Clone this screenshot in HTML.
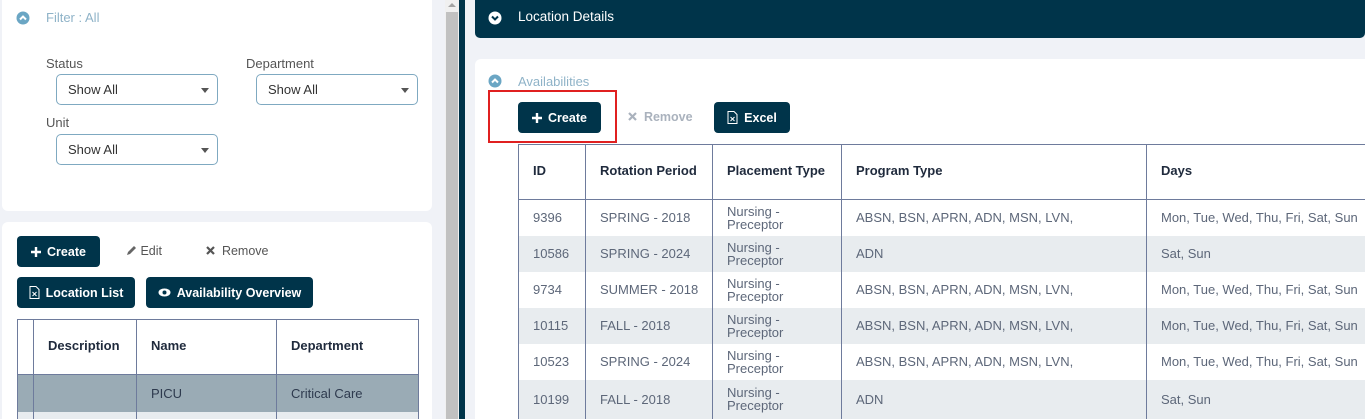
<!DOCTYPE html>
<html style="overflow:hidden;height:419px"><head><meta charset="utf-8"><style>
*{box-sizing:border-box;margin:0;padding:0}
html,body{overflow:hidden}
body{width:1365px;height:419px;background:#f0f2f7;font-family:"Liberation Sans",sans-serif;font-size:13px;color:#3d4a5c;position:relative}
.a{position:absolute}
.card{background:#fff;border-radius:6px}
.lbl{color:#555;font-size:13px}
.sel{border:1px solid #7fa9c1;border-radius:5px;height:31px;background:#fff;padding:7px 11px;font-size:13px;color:#333}
.sel:after{content:"";position:absolute;right:8px;top:13px;border:4.5px solid transparent;border-top:5px solid #555}
.btn{background:#00344a;color:#fff;border-radius:4px;font-weight:bold;font-size:12.5px;display:flex;align-items:center;justify-content:center;gap:6px}
table{border-collapse:collapse;position:absolute;table-layout:fixed}
td,th{border-left:1px solid #6e7b9c;border-right:1px solid #6e7b9c;padding:0 14px;text-align:left;white-space:nowrap;overflow:hidden}
th{font-weight:bold;color:#1f2a3c;font-size:13px;border-bottom:1px solid #6e7b9c;padding-bottom:3px}
td{color:#5d6779;font-size:13px}
.z td{background:#e8ecef}
td.w{white-space:normal;line-height:13px}
</style></head><body>
<div class="a card" style="left:2px;top:-6px;width:430px;height:217px"></div>
<svg class="a" style="left:16px;top:11px" width="14" height="14" viewBox="0 0 14 14"><circle cx="7" cy="7" r="6.5" fill="#6ba6c4"/><path d="M4 8.5 7 5.5 10 8.5" stroke="#fff" stroke-width="2" fill="none"/></svg>
<div class="a" style="left:46px;top:10px;color:#8fb3c8;font-size:13px">Filter : All</div>
<div class="a lbl" style="left:46px;top:56px">Status</div>
<div class="a lbl" style="left:246px;top:56px">Department</div>
<div class="a sel" style="left:56px;top:74px;width:162px">Show All</div>
<div class="a sel" style="left:256px;top:74px;width:162px">Show All</div>
<div class="a lbl" style="left:46px;top:115px">Unit</div>
<div class="a sel" style="left:56px;top:134px;width:162px">Show All</div>

<div class="a" style="left:2px;top:222px;width:430px;height:197px;background:#fff;border-radius:6px 6px 0 0"></div>
<div class="a btn" style="left:17px;top:236px;width:83px;height:31px"><svg width="10" height="10"><path d="M5 0v10M0 5h10" stroke="#fff" stroke-width="2.4"/></svg>Create</div>
<div class="a" style="left:126px;top:244px;color:#555;font-size:12.5px"><svg width="11" height="11" style="vertical-align:-1px"><path d="M1 10 2 7 8 1 10 3 4 9Z" fill="#666"/></svg> Edit</div>
<div class="a" style="left:206px;top:244px;color:#555;font-size:12.5px"><svg width="9" height="9" style="vertical-align:0"><path d="M1 1 8 8M8 1 1 8" stroke="#555" stroke-width="2.2"/></svg>&nbsp; Remove</div>
<div class="a btn" style="left:17px;top:277px;width:118px;height:31px"><svg width="11" height="13"><path d="M1 .5h6l3 3v9H1z" fill="none" stroke="#fff"/><path d="M3.5 6l4 4M7.5 6l-4 4" stroke="#fff"/></svg>Location List</div>
<div class="a btn" style="left:146px;top:277px;width:167px;height:31px"><svg width="13" height="9"><ellipse cx="6.5" cy="4.5" rx="6" ry="4" fill="#fff"/><circle cx="6.5" cy="4.5" r="2" fill="#00344a"/></svg>Availability Overview</div>
<table style="left:17px;top:319px;width:401px;border:1px solid #6e7b9c;border-bottom:0">
<colgroup><col style="width:16px"><col style="width:103px"><col style="width:140px"><col style="width:142px"></colgroup>
<tr style="height:55px"><th></th><th>Description</th><th>Name</th><th>Department</th></tr>
<tr style="height:37px"><td style="background:#9aabb5"></td><td style="background:#9aabb5"></td><td style="background:#9aabb5;color:#2e3a4e">PICU</td><td style="background:#9aabb5;color:#2e3a4e">Critical Care</td></tr>
<tr class="z" style="height:7px;line-height:0;font-size:0"><td></td><td></td><td></td><td></td></tr>
</table>
<div class="a" style="left:445px;top:0;width:14px;height:419px;background:#f0f0f0"></div>
<div class="a" style="left:446px;top:12px;width:12px;height:407px;background:#c1c1c1"></div>
<div class="a" style="left:448px;top:3px;border:4px solid transparent;border-bottom:4px solid #a3a3a3;border-top:0"></div>
<div class="a" style="left:459px;top:0;width:6px;height:419px;background:#00344a"></div>
<div class="a" style="left:475px;top:-5px;width:890px;height:43px;background:#00344a;border-radius:5px"></div>
<svg class="a" style="left:488px;top:11px" width="14" height="14" viewBox="0 0 14 14"><circle cx="7" cy="7" r="6.5" fill="#fff"/><path d="M4 5.5 7 8.5 10 5.5" stroke="#00344a" stroke-width="2" fill="none"/></svg>
<div class="a" style="left:518px;top:9px;color:#fff;font-size:13.5px">Location Details</div>
<div class="a" style="left:475px;top:59px;width:890px;height:360px;background:#fff;border-radius:6px 0 0 0"></div>
<svg class="a" style="left:488px;top:74px" width="14" height="14" viewBox="0 0 14 14"><circle cx="7" cy="7" r="6.5" fill="#6ba6c4"/><path d="M4 8.5 7 5.5 10 8.5" stroke="#fff" stroke-width="2" fill="none"/></svg>
<div class="a" style="left:518px;top:74px;color:#8fb3c8;font-size:13px">Availabilities</div>
<div class="a" style="left:488px;top:90px;width:129px;height:53px;border:2px solid #e02020"></div>
<div class="a btn" style="left:518px;top:102px;width:83px;height:31px"><svg width="10" height="10"><path d="M5 0v10M0 5h10" stroke="#fff" stroke-width="2.4"/></svg>Create</div>
<div class="a" style="left:628px;top:110px;color:#aab2bd;font-size:12.5px;font-weight:bold"><svg width="9" height="9"><path d="M1 1 8 8M8 1 1 8" stroke="#aab2bd" stroke-width="2.2"/></svg>&nbsp; Remove</div>
<div class="a btn" style="left:714px;top:102px;width:76px;height:31px"><svg width="11" height="13"><path d="M1 .5h6l3 3v9H1z" fill="none" stroke="#fff"/><path d="M3.5 6l4 4M7.5 6l-4 4" stroke="#fff"/></svg>Excel</div>
<table style="left:518px;top:144px;width:847px;border-top:1px solid #6e7b9c;border-left:1px solid #6e7b9c">
<colgroup><col style="width:67px"><col style="width:127px"><col style="width:129px"><col style="width:305px"><col style="width:219px"></colgroup>
<tr style="height:55px"><th>ID</th><th>Rotation Period</th><th>Placement Type</th><th>Program Type</th><th>Days</th></tr>
<tr style="height:36px"><td>9396</td><td>SPRING - 2018</td><td class="w">Nursing -<br>Preceptor</td><td>ABSN, BSN, APRN, ADN, MSN, LVN,</td><td style="border-right:0">Mon, Tue, Wed, Thu, Fri, Sat, Sun</td></tr>
<tr class="z" style="height:36px"><td>10586</td><td>SPRING - 2024</td><td class="w">Nursing -<br>Preceptor</td><td>ADN</td><td style="border-right:0">Sat, Sun</td></tr>
<tr style="height:36px"><td>9734</td><td>SUMMER - 2018</td><td class="w">Nursing -<br>Preceptor</td><td>ABSN, BSN, APRN, ADN, MSN, LVN,</td><td style="border-right:0">Mon, Tue, Wed, Thu, Fri, Sat, Sun</td></tr>
<tr class="z" style="height:36px"><td>10115</td><td>FALL - 2018</td><td class="w">Nursing -<br>Preceptor</td><td>ABSN, BSN, APRN, ADN, MSN, LVN,</td><td style="border-right:0">Mon, Tue, Wed, Thu, Fri, Sat, Sun</td></tr>
<tr style="height:36px"><td>10523</td><td>SPRING - 2024</td><td class="w">Nursing -<br>Preceptor</td><td>ABSN, BSN, APRN, ADN, MSN, LVN,</td><td style="border-right:0">Mon, Tue, Wed, Thu, Fri, Sat, Sun</td></tr>
<tr class="z" style="height:39px"><td>10199</td><td>FALL - 2018</td><td class="w">Nursing -<br>Preceptor</td><td>ADN</td><td style="border-right:0">Sat, Sun</td></tr>
</table>
</body></html>
